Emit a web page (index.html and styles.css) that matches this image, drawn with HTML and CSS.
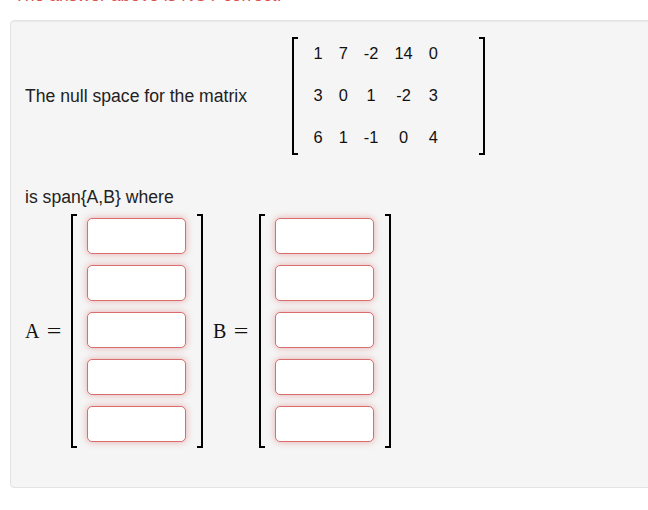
FILE: index.html
```html
<!DOCTYPE html>
<html>
<head>
<meta charset="utf-8">
<link rel="stylesheet" href="styles.css">
</head>
<body>
<div class="alert">The answer above is NOT correct.</div>
<div class="well">
  <div class="row1">
    <div class="label">The null space for the matrix</div>
    <div class="mat">
      <span class="lb"></span>
      <table class="cells">
        <tr><td>1</td><td>7</td><td>-2</td><td>14</td><td>0</td></tr>
        <tr><td>3</td><td>0</td><td>1</td><td>-2</td><td>3</td></tr>
        <tr><td>6</td><td>1</td><td>-1</td><td>0</td><td>4</td></tr>
      </table>
      <span class="rb"></span>
    </div>
  </div>
  <div class="span-text">is span{A,B} where</div>
  <div class="vecs">
    <div class="vlabel">A<span class="eq">=</span></div>
    <span class="lb"></span>
    <div class="col">
      <input class="cell" type="text">
      <input class="cell" type="text">
      <input class="cell" type="text">
      <input class="cell" type="text">
      <input class="cell" type="text">
    </div>
    <span class="rb"></span>
    <div class="vlabel second">B<span class="eq">=</span></div>
    <span class="lb"></span>
    <div class="col">
      <input class="cell" type="text">
      <input class="cell" type="text">
      <input class="cell" type="text">
      <input class="cell" type="text">
      <input class="cell" type="text">
    </div>
    <span class="rb"></span>
  </div>
</div>
</body>
</html>
```
FILE: styles.css
```css
html, body {
  margin: 0;
  padding: 0;
  overflow: hidden;
  background: #fff;
}
body {
  font-family: "Liberation Sans", Arial, sans-serif;
  font-size: 17.6px;
  color: #222;
}
.alert {
  color: #d9534f;
  line-height: 20px;
  margin-top: -15px;
  padding-left: 14px;
  white-space: nowrap;
}
.well {
  box-sizing: border-box;
  margin: 15px 0 0 10px;
  width: 660px;
  height: 468px;
  padding: 16px 0 0 14px;
  background: #f5f5f5;
  border: 1px solid #e3e3e3;
  border-radius: 4px;
  box-shadow: inset 0 1px 1px rgba(0,0,0,.05);
}
.row1 {
  display: flex;
  align-items: center;
}
.label {
  width: 267px;
  flex: none;
  line-height: 20px;
}
.mat {
  display: flex;
  align-items: stretch;
}
.lb, .rb {
  display: block;
  flex: none;
  width: 4px;
  border: 2px solid #000;
}
.lb { border-right: none; }
.rb { border-left: none; }
.cells {
  border-collapse: collapse;
  border-spacing: 0;
  margin: -5px 33px -3px 7.6px;
  font-size: 16.4px;
  color: #111;
}
.cells td {
  height: 42px;
  padding: 0 8px;
  text-align: center;
}
.span-text {
  margin-top: 32px;
  line-height: 20px;
}
.vecs {
  display: flex;
  align-items: stretch;
  margin-top: 7px;
}
.vlabel {
  width: 46px;
  flex: none;
  align-self: center;
  font-family: "Liberation Serif", "Times New Roman", serif;
  font-size: 20px;
  color: #111;
  white-space: nowrap;
}
.vlabel.second {
  margin-left: 10px;
}
.eq {
  display: inline-block;
  width: 18px;
  margin-left: 6px;
  text-align: center;
  transform: scaleX(1.3);
}
.col {
  display: flex;
  flex-direction: column;
  gap: 11px;
  padding: 4px 11px 6px 10px;
}
.cell {
  box-sizing: border-box;
  display: block;
  width: 99px;
  height: 36px;
  margin: 0;
  padding: 0;
  background: #fff;
  border: 1px solid #d66f6d;
  border-radius: 5px;
  box-shadow: 0 0 7px rgba(210, 80, 80, .45);
  outline: none;
}
```
